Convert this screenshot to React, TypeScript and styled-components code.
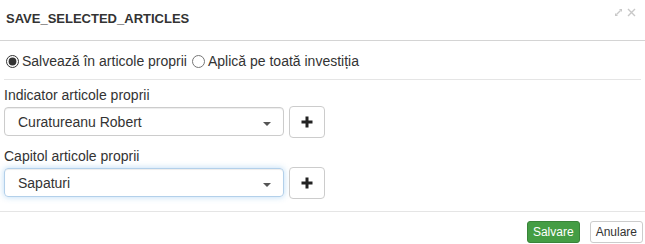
import styled, { createGlobalStyle } from "styled-components";

const GlobalStyle = createGlobalStyle`
	html, body {
		margin: 0;
		padding: 0;
		background: #fff;
		font-family: "Liberation Sans", Arial, sans-serif;
		color: #333;
	}
`

const Dialog = styled.div`
	width: 645px;
	height: 244px;
	display: flex;
	flex-direction: column;
	background: #fff;
`

const Header = styled.div`
	display: flex;
	align-items: center;
	justify-content: space-between;
	height: 36px;
	padding: 0 9px 4px 6px;
	border-bottom: 1px solid #d4d4d4;
`

const Title = styled.h1`
	margin: 0;
	font-family: "Liberation Sans Narrow", "Liberation Sans", Arial, sans-serif;
	font-size: 13px;
	font-weight: bold;
	color: #333;
`

const HeaderIcons = styled.div`
	display: flex;
	align-items: center;
	gap: 4px;
	margin-top: -12px;
`

const Body = styled.div`
	flex: 1;
	padding: 10px 4px 0 4px;
`

const RadioRow = styled.div`
	display: flex;
	align-items: center;
	height: 20px;
	font-size: 14px;
	padding-bottom: 8px;
	border-bottom: 1px solid #e5e5e5;
`

const RadioLabel = styled.label`
	display: flex;
	align-items: center;
	margin-right: 3px;
`

const Radio = styled.input`
	margin: 0 3px 0 2px;
	width: 13px;
	height: 13px;
	accent-color: #333;
`

const Field = styled.div`
	display: flex;
	flex-direction: column;
`

const Label = styled.div<{ $first?: boolean }>`
	font-size: 14px;
	line-height: 16px;
	margin-top: ${(p) => (p.$first ? "7px" : "10px")};
	margin-bottom: 4px;
`

const InputRow = styled.div`
	display: flex;
	align-items: flex-start;
	gap: 5px;
`

const Select = styled.div<{ $focused?: boolean }>`
	box-sizing: border-box;
	width: 280px;
	height: 29px;
	display: flex;
	align-items: center;
	justify-content: space-between;
	padding: 0 12px 0 13px;
	font-size: 14px;
	border: 1px solid ${(p) => (p.$focused ? "#b3d0ea" : "#ccc")};
	border-radius: 4px;
	box-shadow: ${(p) =>
		p.$focused
			? "inset 0 1px 1px rgba(0,0,0,.075), 0 0 6px rgba(102,175,233,.45)"
			: "inset 0 1px 1px rgba(0,0,0,.075)"};
	color: #333;
`

const Caret = styled.span`
	width: 0;
	height: 0;
	border-left: 4px solid transparent;
	border-right: 4px solid transparent;
	border-top: 4px solid #555;
	margin-top: 4px;
`

const PlusButton = styled.button`
	box-sizing: border-box;
	width: 36px;
	height: 32px;
	margin-top: -1px;
	display: flex;
	align-items: center;
	justify-content: center;
	background: #fff;
	border: 1px solid #ccc;
	border-radius: 4px;
	padding: 0;
`

const Footer = styled.div`
	display: flex;
	justify-content: flex-end;
	align-items: center;
	gap: 10px;
	height: 32px;
	padding: 0 2px 0 0;
	border-top: 1px solid #e5e5e5;
`

const Button = styled.button<{ $primary?: boolean }>`
	box-sizing: border-box;
	height: 22px;
	padding: 0 5px;
	font-family: "Liberation Sans", Arial, sans-serif;
	font-size: 12px;
	border-radius: 3px;
	border: 1px solid ${(p) => (p.$primary ? "#398439" : "#ccc")};
	background: ${(p) => (p.$primary ? "#449d44" : "#fff")};
	color: ${(p) => (p.$primary ? "#fff" : "#333")};
	margin-top: 8px;
`

const Plus = () => (
	<svg width="12" height="12" viewBox="0 0 12 12">
		<rect x="4.5" y="0.5" width="3" height="11" fill="#222" />
		<rect x="0.5" y="4.5" width="11" height="3" fill="#222" />
	</svg>
)

const Expand = () => (
	<svg width="9" height="9" viewBox="0 0 9 9">
		<path d="M5 1 H8 V4 Z" fill="#c8c8c8" />
		<path d="M1 5 V8 H4 Z" fill="#c8c8c8" />
		<path d="M2.5 6.5 L6.5 2.5" stroke="#c8c8c8" strokeWidth="1.2" />
	</svg>
)

const Close = () => (
	<svg width="9" height="9" viewBox="0 0 9 9">
		<path d="M1 1 L8 8 M8 1 L1 8" stroke="#c8c8c8" strokeWidth="1.4" />
	</svg>
)

export default function App() {
	return (
		<>
			<GlobalStyle />
			<Dialog>
				<Header>
					<Title>SAVE_SELECTED_ARTICLES</Title>
					<HeaderIcons>
						<Expand />
						<Close />
					</HeaderIcons>
				</Header>
				<Body>
					<RadioRow>
						<RadioLabel>
							<Radio type="radio" name="scope" defaultChecked />
							Salvează în articole proprii
						</RadioLabel>
						<RadioLabel>
							<Radio type="radio" name="scope" />
							Aplică pe toată investiția
						</RadioLabel>
					</RadioRow>
					<Field>
						<Label $first>Indicator articole proprii</Label>
						<InputRow>
							<Select>
								Curatureanu Robert
								<Caret />
							</Select>
							<PlusButton><Plus /></PlusButton>
						</InputRow>
					</Field>
					<Field>
						<Label>Capitol articole proprii</Label>
						<InputRow>
							<Select $focused>
								Sapaturi
								<Caret />
							</Select>
							<PlusButton><Plus /></PlusButton>
						</InputRow>
					</Field>
				</Body>
				<Footer>
					<Button $primary>Salvare</Button>
					<Button>Anulare</Button>
				</Footer>
			</Dialog>
		</>
	);
}
